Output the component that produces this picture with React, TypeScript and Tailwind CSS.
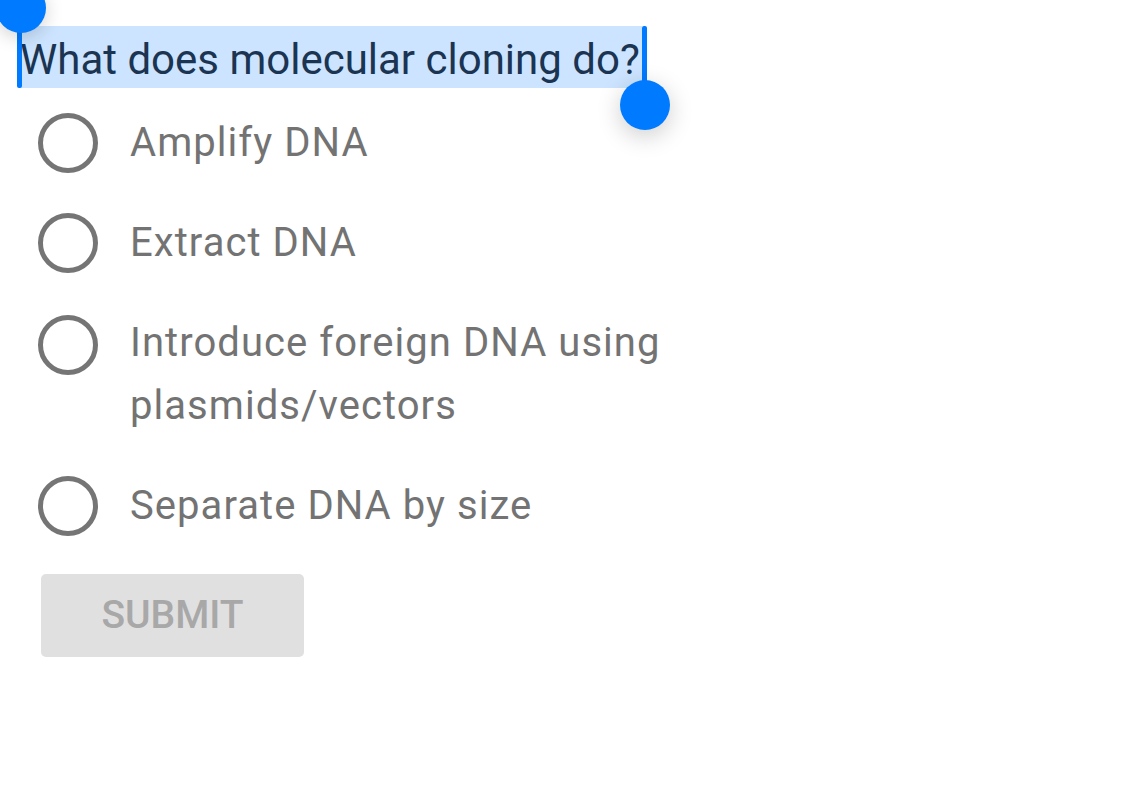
import React from "react";

const options = [
  "Amplify DNA",
  "Extract DNA",
  "Introduce foreign DNA using plasmids/vectors",
  "Separate DNA by size",
];

export default function App() {
  return (
    <div className="relative w-[1131px] h-[799px] bg-white overflow-hidden font-['Roboto',sans-serif]">
      <div className="pt-[26px] pl-[20px]">
        <div className="relative inline-block">
          <div className="h-[62px] bg-[#cce4ff] text-[42px] leading-[62px] pt-[3px] text-[#1b3452] whitespace-nowrap pr-[2px]">
            What does molecular cloning do?
          </div>
          {/* left cursor + handle */}
          <div className="absolute left-[-3px] top-0 w-[5px] h-[62px] bg-[#007aff] rounded-[2px]" />
          <div className="absolute left-[-24px] top-[-43px] w-[50px] h-[50px] rounded-full bg-[#007aff] shadow-[0_4px_18px_rgba(0,0,0,0.18)]" />
          {/* right cursor + handle */}
          <div className="absolute left-full top-0 w-[5px] h-[80px] bg-[#007aff] rounded-[2px]" />
          <div className="absolute left-[calc(100%-22px)] top-[54px] w-[50px] h-[50px] rounded-full bg-[#007aff] shadow-[0_6px_24px_rgba(0,0,0,0.2)]" />
        </div>
      </div>

      <div className="mt-[23px] pl-[38px] flex flex-col gap-[37px]">
        {options.map((o, i) => (
          <div key={o} className="flex items-start gap-[32px]">
            <div className={i === 2 ? "h-[63px] pt-[4px] flex items-center shrink-0" : "h-[63px] flex items-center shrink-0"}>
              <div className="w-[60px] h-[60px] rounded-full border-[5px] border-[#757575]" />
            </div>
            <div className="w-[560px] text-[40px] leading-[63px] tracking-[1.05px] text-[#737373]">{o}</div>
          </div>
        ))}
      </div>

      <div className="mt-[37px] pl-[41px]">
        <div className="w-[263px] h-[83px] rounded-[5px] bg-[#e0e0e0] flex items-center justify-center text-[39px] font-medium text-[#a8a8a8]">
          SUBMIT
        </div>
      </div>
    </div>
  );
}
